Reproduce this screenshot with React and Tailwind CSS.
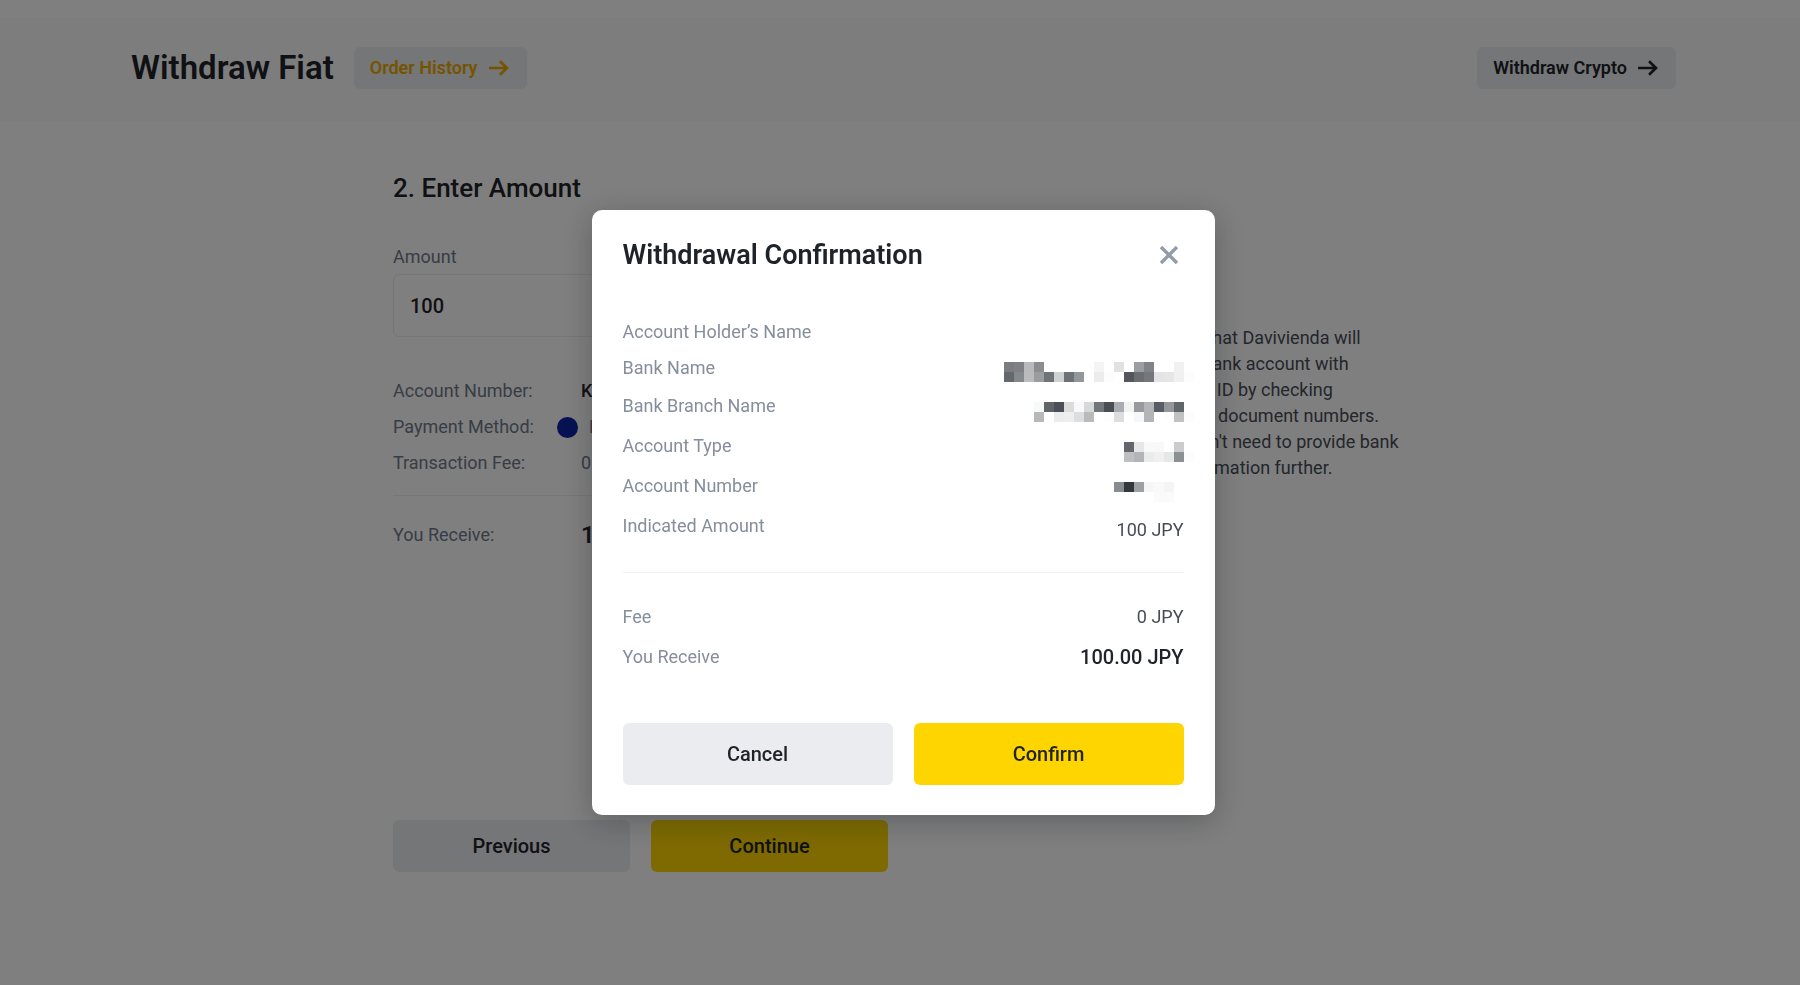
import React from "react";

const bankName = [
  "#7a7c81 #7e8085 #b8babc #8b8e91 . . . . . #f4f4f4 . #dfe1e2 . #9a9da1 #808388 . . #f1f1f1 .",
  "#64686c #86898b #babbbd #999da0 #707378 #d0d1d3 #6e7176 #94979a . #ececec #fcfcfc . #53565d #6a6d72 #74777c #e4e4e4 #e6e6e6 #f0f0f0 #fcfcfc",
];

const branchName = [
  "#f7f8f8 #606468 #4b4f56 #dbdbdc #f9f9f9 #d7d8d9 #72757a #4a4e54 #abacb1 #f2f2f3 #999a9f #b4b5b9 #5a5c65 #94969b #60666a .",
  "#b7b8b9 . #ebeded #eeeeee #dcdfdf #b8babb . #fdfdfd #dcdde0 . #f6f7f7 #b3b4b7 . #fdfdfd #bfc1c2 #fcfcfc",
];

const accountType = [
  "#63676c #e7e7e7 #f9f9f9 #f8f8f8 . #cbccce .",
  "#bdbfc0 #b3b4b7 #ebebeb #f0f0f0 #e6e8e7 #8c9093 #fcfcfc",
];

const accountNumber = [
  "#888c90 #33383d #9da1a3 #f6f6f6 #f9f9f9 #f3f5f4 . .",
  ". . . . #fafafa #fafafa . .",
];

const Mosaic = ({ rows, label }) => {
  const cells = rows.map((row) => row.split(" "));
  const width = cells[0].length * 10;
  return (
    <svg
      role="img"
      aria-label={label}
      width={width}
      height="20"
      viewBox={`0 0 ${width} 20`}
      shapeRendering="crispEdges"
      className="-mr-[10px]"
    >
      {cells.map((row, y) =>
        row.map(
          (color, x) =>
            color !== "." && (
              <rect
                key={`${x}-${y}`}
                x={x * 10}
                y={y * 10}
                width="10"
                height="10"
                fill={color}
              />
            )
        )
      )}
    </svg>
  );
};

const ArrowRight = () => (
  <svg
    width="20"
    height="16"
    viewBox="0 0 20 16"
    fill="none"
    stroke="currentColor"
    strokeWidth="2.7"
    aria-hidden="true"
  >
    <path d="M0 8H18M11 1.2L18 8L11 14.8" />
  </svg>
);

const HeaderLink = ({ children, className }) => (
  <a
    href="#"
    className={`flex h-[42px] items-center gap-[11px] rounded-md bg-[#eaecef] pl-4 pr-[18px] text-lg font-semibold ${className}`}
  >
    {children}
    <ArrowRight />
  </a>
);

const DetailRow = ({ label, children, className = "h-10" }) => (
  <div className={`flex items-center justify-between ${className}`}>
    <dt className="text-[#848e9c]">{label}</dt>
    <dd className="text-[#474d57]">{children}</dd>
  </div>
);

const FormRow = ({ label, children }) => (
  <div className="flex h-9 items-center">
    <dt className="w-[188px] shrink-0 text-[#707a8a]">{label}</dt>
    <dd>{children}</dd>
  </div>
);

function WithdrawPage() {
  return (
    <div>
      <header className="mt-[17px] flex h-[104px] items-center justify-between bg-[#fafafa] pb-[2px] pl-[131px] pr-[124px]">
        <div className="flex items-center gap-5">
          <h1 className="text-[33px] font-semibold">Withdraw Fiat</h1>
          <HeaderLink className="text-[#eba800]">Order History</HeaderLink>
        </div>
        <HeaderLink className="text-[#1e2329]">Withdraw Crypto</HeaderLink>
      </header>

      <main className="flex gap-[220px] pl-[393px] pt-[51px]">
        <form className="w-[495px] shrink-0">
          <h2 className="text-[26px] font-medium leading-8">2. Enter Amount</h2>
          <label
            htmlFor="amount"
            className="mt-[39px] block text-lg leading-7 text-[#707a8a]"
          >
            Amount
          </label>
          <input
            id="amount"
            type="text"
            defaultValue="100"
            className="mt-[3px] block h-[63px] w-full rounded-md border border-[#eaecef] px-4 text-xl font-medium"
          />

          <dl className="mt-9 text-lg">
            <FormRow label="Account Number:">
              <span className="font-medium">K</span>
            </FormRow>
            <FormRow label="Payment Method:">
              <span className="-ml-6 flex items-center gap-[11px] text-[#707a8a]">
                <span className="size-[21px] rounded-full bg-[#0c24a4]" />B
              </span>
            </FormRow>
            <FormRow label="Transaction Fee:">
              <span className="text-[#707a8a]">0</span>
            </FormRow>
            <div className="mb-[21px] mt-[14px] border-t border-[#eaecef]" />
            <FormRow label="You Receive:">
              <span className="text-2xl font-semibold">100</span>
            </FormRow>
          </dl>

          <div className="mt-[267px] grid grid-cols-2 gap-[21px] text-xl font-medium">
            <button type="button" className="h-[52px] rounded-md bg-[#eaecef]">
              Previous
            </button>
            <button type="button" className="h-[52px] rounded-md bg-[#fcd500]">
              Continue
            </button>
          </div>
        </form>

        <p className="mt-[153px] whitespace-nowrap text-lg leading-[26px] text-[#474d57]">
          Please note that Davivienda will
          <br />
          match your bank account with
          <br />
          each owner's ID by checking
          <br />
          passport and document numbers.
          <br />
          Then, you don't need to provide bank
          <br />
          account information further.
        </p>
      </main>
    </div>
  );
}

function ConfirmationDialog() {
  return (
    <div className="fixed inset-0 flex items-center justify-center bg-black/50 pl-[6px] pt-10">
      <div
        role="dialog"
        aria-modal="true"
        aria-labelledby="dialog-title"
        className="w-[623px] rounded-[10px] bg-white px-[31px] pb-[30px] pt-[27px] shadow-[0_6px_30px_rgba(24,26,32,0.3)]"
      >
        <div className="flex items-center justify-between">
          <h2 id="dialog-title" className="text-[27px] font-semibold leading-9">
            Withdrawal Confirmation
          </h2>
          <button type="button" aria-label="Close" className="p-[5px]">
            <svg
              width="20"
              height="20"
              viewBox="0 0 20 20"
              fill="none"
              stroke="#929ba8"
              strokeWidth="3.4"
              aria-hidden="true"
            >
              <path d="M2 2L18 18M18 2L2 18" />
            </svg>
          </button>
        </div>

        <dl className="mt-[41px] text-lg">
          <DetailRow label="Account Holder’s Name" className="h-9" />
          <DetailRow label="Bank Name" className="h-9">
            <div className="pt-2">
              <Mosaic rows={bankName} label="Hidden bank name" />
            </div>
          </DetailRow>
          <DetailRow label="Bank Branch Name">
            <div className="pt-3">
              <Mosaic rows={branchName} label="Hidden branch name" />
            </div>
          </DetailRow>
          <DetailRow label="Account Type">
            <div className="pt-3">
              <Mosaic rows={accountType} label="Hidden account type" />
            </div>
          </DetailRow>
          <DetailRow label="Account Number">
            <div className="pt-3">
              <Mosaic rows={accountNumber} label="Hidden account number" />
            </div>
          </DetailRow>
          <DetailRow label="Indicated Amount">
            <div className="pt-2">100 JPY</div>
          </DetailRow>
        </dl>

        <dl className="mt-[26px] border-t border-[#f0f1f2] pt-6 text-lg">
          <DetailRow label="Fee">0 JPY</DetailRow>
          <DetailRow label="You Receive">
            <span className="text-xl font-medium text-[#1e2329]">
              100.00 JPY
            </span>
          </DetailRow>
        </dl>

        <div className="mt-[46px] grid grid-cols-2 gap-[21px] text-xl font-medium">
          <button type="button" className="h-[62px] rounded-md bg-[#eaecef]">
            Cancel
          </button>
          <button type="button" className="h-[62px] rounded-md bg-[#ffd500]">
            Confirm
          </button>
        </div>
      </div>
    </div>
  );
}

export default function App() {
  return (
    <div className="min-h-screen overflow-hidden bg-white font-['Roboto',sans-serif] text-[#1e2329]">
      <WithdrawPage />
      <ConfirmationDialog />
    </div>
  );
}
